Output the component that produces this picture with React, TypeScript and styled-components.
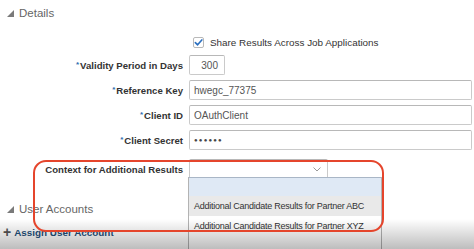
import React from 'react'
import styled, { createGlobalStyle } from 'styled-components'

const GlobalStyle = createGlobalStyle`
  html, body {
    margin: 0;
    padding: 0;
    background: #fff;
  }
  body {
    font-family: "Liberation Sans", Arial, sans-serif;
  }
`

const Page = styled.div`
  position: relative;
  width: 474px;
  height: 249px;
  overflow: hidden;
  background: #fff;
  display: flex;
  flex-flow: column;
`

const SectionTitle = styled.div<{ $gap?: number }>`
  display: flex;
  align-items: center;
  gap: 5px;
  height: 22px;
  margin-top: ${(p) => p.$gap ?? 0}px;
  padding-left: 7px;
  font-size: 11.5px;
  color: #666;
`

const CheckRow = styled.label`
  display: flex;
  align-items: center;
  gap: 6px;
  height: 20px;
  margin-top: 8px;
  padding-left: 193px;
  font-size: 9.9px;
  color: #333;
`

const CheckBox = styled.span`
  width: 9px;
  height: 9px;
  border: 1px solid #b9b9b9;
  border-radius: 2px;
  background: #fff;
  display: flex;
  align-items: center;
  justify-content: center;
`

const Fields = styled.div`
  display: flex;
  flex-flow: column;
  gap: 5px;
  margin-top: 3px;
`

const FieldRow = styled.div<{ $extra?: number }>`
  display: flex;
  align-items: center;
  gap: 6px;
  height: 20px;
  margin-top: ${(p) => p.$extra ?? 0}px;
`

const Label = styled.div`
  width: 183px;
  text-align: right;
  font-size: 9.6px;
  font-weight: bold;
  color: #333;
  white-space: nowrap;
`

const Req = styled.span`
  color: #2e6db0;
  font-size: 8px;
  vertical-align: 2px;
  margin-right: 1px;
`

const Input = styled.div<{ $width: number; $right?: boolean }>`
  box-sizing: border-box;
  width: ${(p) => p.$width}px;
  height: 20px;
  border: 1px solid #cacaca;
  border-top-color: #b8b8b8;
  border-radius: 2px;
  background: #fff;
  padding: 0 ${(p) => (p.$right ? 6 : 4)}px;
  display: flex;
  align-items: center;
  justify-content: ${(p) => (p.$right ? 'flex-end' : 'flex-start')};
  font-size: 10px;
  color: #555;
`

const Dots = styled.span`
  font-size: 6px;
  letter-spacing: 1.2px;
  color: #444;
`

const Select = styled(Input)`
  justify-content: flex-end;
  padding-right: 6px;
`

const AssignLink = styled.div`
  display: flex;
  align-items: center;
  gap: 3px;
  height: 16px;
  margin-top: 4px;
  padding-left: 3px;
  font-size: 9.9px;
  font-weight: bold;
  color: #1f4f79;
`

const Plus = styled.span`
  font-size: 14px;
  line-height: 1;
  color: #555;
`

const DropList = styled.div`
  position: absolute;
  left: 188px;
  top: 177px;
  width: 194px;
  height: 90px;
  box-sizing: border-box;
  border: 1px solid #b3b3b3;
  border-top-color: #a9b6c6;
  background: #fff;
  display: flex;
  flex-flow: column;
`

const Option = styled.div<{ $bg: string; $h: number }>`
  height: ${(p) => p.$h}px;
  flex: none;
  background: ${(p) => p.$bg};
  display: flex;
  align-items: center;
  padding-left: 5px;
  font-size: 9px;
  letter-spacing: -0.25px;
  color: #333;
  white-space: nowrap;
`

const Shade = styled.div`
  position: absolute;
  left: 0;
  right: 0;
  bottom: 0;
  height: 30px;
  background: linear-gradient(to bottom, rgba(0, 0, 0, 0), rgba(0, 0, 0, 0.26));
  pointer-events: none;
`

const Highlight = styled.div`
  position: absolute;
  left: 33px;
  top: 160px;
  width: 351px;
  height: 72px;
  box-sizing: border-box;
  border: 2px solid #e5452c;
  border-radius: 13px;
  pointer-events: none;
`

const Triangle = () => (
  <svg width="7" height="7" viewBox="0 0 7 7">
    <polygon points="7,0 7,7 0,7" fill="#7a7a7a" />
  </svg>
)

const Check = () => (
  <svg width="9" height="9" viewBox="0 0 10 10">
    <path d="M1.5 5.2 L4 7.6 L8.7 2.2" fill="none" stroke="#2a6fc0" strokeWidth="1.8" strokeLinecap="round" strokeLinejoin="round" />
  </svg>
)

const Chevron = () => (
  <svg width="8" height="5" viewBox="0 0 8 5">
    <path d="M0.5 0.5 L4 4 L7.5 0.5" fill="none" stroke="#9a9a9a" strokeWidth="1" />
  </svg>
)

const fields = [
  { label: 'Reference Key', value: 'hwegc_77375' },
  { label: 'Client ID', value: 'OAuthClient' },
]

export default function App() {
  return (
    <>
      <GlobalStyle />
      <Page>
        <SectionTitle $gap={2}>
          <Triangle />
          Details
        </SectionTitle>
        <CheckRow>
          <CheckBox>
            <Check />
          </CheckBox>
          Share Results Across Job Applications
        </CheckRow>
        <Fields>
          <FieldRow>
            <Label>
              <Req>*</Req>Validity Period in Days
            </Label>
            <Input $width={36} $right>
              300
            </Input>
          </FieldRow>
          {fields.map((f) => (
            <FieldRow key={f.label}>
              <Label>
                <Req>*</Req>
                {f.label}
              </Label>
              <Input $width={283}>{f.value}</Input>
            </FieldRow>
          ))}
          <FieldRow>
            <Label>
              <Req>*</Req>Client Secret
            </Label>
            <Input $width={283}>
              <Dots>●●●●●●</Dots>
            </Input>
          </FieldRow>
          <FieldRow $extra={4}>
            <Label>Context for Additional Results</Label>
            <Select $width={139}>
              <Chevron />
            </Select>
          </FieldRow>
        </Fields>
        <SectionTitle $gap={19}>
          <Triangle />
          User Accounts
        </SectionTitle>
        <AssignLink>
          <Plus>+</Plus>
          Assign User Account
        </AssignLink>
        <DropList>
          <Option $bg="#dfe9f5" $h={18} />
          <Option $bg="#e9e9e9" $h={20}>
            Additional Candidate Results for Partner ABC
          </Option>
          <Option $bg="#fff" $h={20}>
            Additional Candidate Results for Partner XYZ
          </Option>
        </DropList>
        <Shade />
        <Highlight />
      </Page>
    </>
  )
}
